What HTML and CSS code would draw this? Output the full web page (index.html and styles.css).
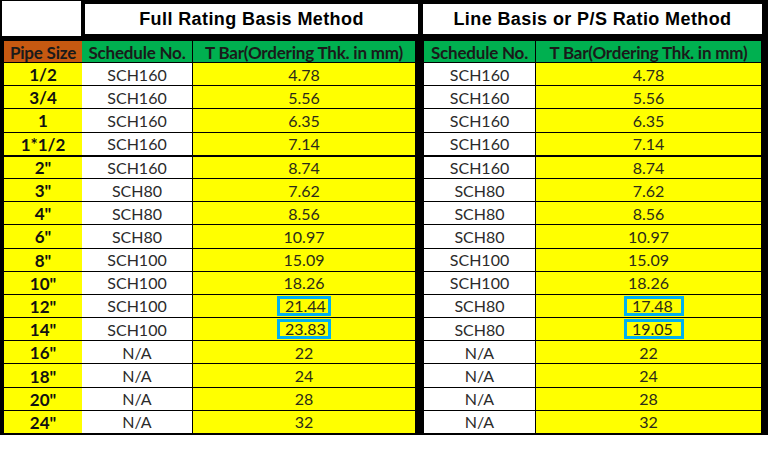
FILE: index.html
```html
<!DOCTYPE html>
<html>
<head>
<meta charset="utf-8">
<link rel="stylesheet" href="styles.css">
</head>
<body>
<div class="sheet">
  <div class="block block-left">
    <div class="top">
      <div class="corner"></div>
      <div class="title">Full Rating Basis Method</div>
    </div>
    <div class="grid grid-left">
      <div class="c hd orange">Pipe Size</div>
      <div class="c hd green">Schedule No.</div>
      <div class="c hd green">T Bar(Ordering Thk. in mm)</div>

      <div class="c ps">1/2</div><div class="c sch">SCH160</div><div class="c val">4.78</div>
      <div class="c ps">3/4</div><div class="c sch">SCH160</div><div class="c val">5.56</div>
      <div class="c ps">1</div><div class="c sch">SCH160</div><div class="c val">6.35</div>
      <div class="c ps">1*1/2</div><div class="c sch">SCH160</div><div class="c val">7.14</div>
      <div class="c ps thick">2"</div><div class="c sch thick">SCH160</div><div class="c val thick">8.74</div>
      <div class="c ps">3"</div><div class="c sch">SCH80</div><div class="c val">7.62</div>
      <div class="c ps">4"</div><div class="c sch">SCH80</div><div class="c val">8.56</div>
      <div class="c ps">6"</div><div class="c sch">SCH80</div><div class="c val">10.97</div>
      <div class="c ps">8"</div><div class="c sch">SCH100</div><div class="c val">15.09</div>
      <div class="c ps">10"</div><div class="c sch">SCH100</div><div class="c val">18.26</div>
      <div class="c ps">12"</div><div class="c sch">SCH100</div><div class="c val"><span class="box box-l">21.44</span></div>
      <div class="c ps">14"</div><div class="c sch">SCH100</div><div class="c val"><span class="box box-l">23.83</span></div>
      <div class="c ps">16"</div><div class="c sch">N/A</div><div class="c val">22</div>
      <div class="c ps">18"</div><div class="c sch">N/A</div><div class="c val">24</div>
      <div class="c ps">20"</div><div class="c sch">N/A</div><div class="c val">28</div>
      <div class="c ps">24"</div><div class="c sch">N/A</div><div class="c val">32</div>
    </div>
  </div>
  <div class="block block-right">
    <div class="top">
      <div class="title">Line Basis or P/S Ratio Method</div>
    </div>
    <div class="grid grid-right">
      <div class="c hd green">Schedule No.</div>
      <div class="c hd green">T Bar(Ordering Thk. in mm)</div>

      <div class="c sch">SCH160</div><div class="c val">4.78</div>
      <div class="c sch">SCH160</div><div class="c val">5.56</div>
      <div class="c sch">SCH160</div><div class="c val">6.35</div>
      <div class="c sch">SCH160</div><div class="c val">7.14</div>
      <div class="c sch thick">SCH160</div><div class="c val thick">8.74</div>
      <div class="c sch">SCH80</div><div class="c val">7.62</div>
      <div class="c sch">SCH80</div><div class="c val">8.56</div>
      <div class="c sch">SCH80</div><div class="c val">10.97</div>
      <div class="c sch">SCH100</div><div class="c val">15.09</div>
      <div class="c sch">SCH100</div><div class="c val">18.26</div>
      <div class="c sch">SCH80</div><div class="c val"><span class="box box-r">17.48</span></div>
      <div class="c sch">SCH80</div><div class="c val"><span class="box box-r">19.05</span></div>
      <div class="c sch">N/A</div><div class="c val">22</div>
      <div class="c sch">N/A</div><div class="c val">24</div>
      <div class="c sch">N/A</div><div class="c val">28</div>
      <div class="c sch">N/A</div><div class="c val">32</div>
    </div>
  </div>
</div>
</body>
</html>
```

FILE: styles.css
```css
html, body {
  margin: 0;
  padding: 0;
  background: #ffffff;
}

.sheet {
  display: flex;
  gap: 5px;
  width: 768px;
  box-sizing: border-box;
  padding: 0 6px 2px 2px;
  background: #000000;
}

.block-left {
  width: 416px;
}

.block-right {
  width: 339px;
}

.top {
  display: flex;
  align-items: flex-start;
  height: 41px;
}

.corner {
  width: 79px;
  height: 35px;
  margin-top: 1px;
  background: #ffffff;
}

.title {
  flex: 1;
  height: 30px;
  margin-top: 4px;
  background: #ffffff;
  display: flex;
  align-items: center;
  justify-content: center;
  font-family: "Liberation Sans", Arial, sans-serif;
  font-weight: bold;
  font-size: 18px;
  letter-spacing: 0.4px;
  color: #000000;
}

.block-left .title {
  margin-left: 4px;
}

.grid {
  display: grid;
  grid-template-rows: 21px repeat(16, 22.2px);
  row-gap: 1px;
  font-family: Lato, "Open Sans", sans-serif;
  font-size: 16px;
  color: #222222;
}

.grid-left {
  margin-left: 2px;
  grid-template-columns: 78px 111px 222px;
}

.grid-left .c:nth-child(3n+1) {
  margin-right: 1px;
}

.grid-left .c:nth-child(3n+2) {
  margin-right: 1px;
}

.grid-right {
  margin-left: 1px;
  grid-template-columns: 111px 225px;
  column-gap: 1px;
}

.c {
  display: flex;
  align-items: center;
  justify-content: center;
  white-space: nowrap;
  line-height: 1;
  padding-top: 1px;
  box-sizing: border-box;
}

.grid-left .c:nth-child(3n+1) {
  width: 78px;
}

.hd {
  font-weight: bold;
  font-size: 17px;
  letter-spacing: -0.2px;
  color: #1a1a1a;
}

.orange {
  background: #c65911;
}

.green {
  background: #00b050;
}

.ps {
  background: #ffff00;
  font-weight: bold;
  font-size: 17px;
  color: #111111;
}

.sch {
  background: #ffffff;
  color: #2b2b2b;
}

.val {
  background: #ffff00;
  color: #2b2b1a;
}

.thick {
  border-top: 1px solid #000000;
}

.box {
  display: flex;
  align-items: center;
  border: 3px solid #00b0f0;
  height: 20px;
  box-sizing: border-box;
  line-height: 14px;
  margin-top: -1px;
}

.box-l {
  width: 54px;
  padding-left: 5px;
}

.box-r {
  width: 60px;
  padding-left: 5px;
  margin-left: 11px;
}
```
